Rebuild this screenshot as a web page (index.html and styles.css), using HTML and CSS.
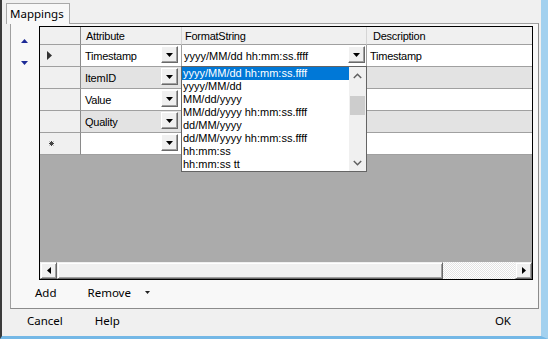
FILE: index.html
```html
<!DOCTYPE html>
<html>
<head>
<meta charset="utf-8">
<title>Mappings</title>
<link rel="stylesheet" href="styles.css">
</head>
<body>
<div class="window">
  <div class="tabstrip"><div class="tab">Mappings</div></div>
  <div class="page">
    <div class="page-main">
      <div class="movers">
        <svg class="mv" width="7" height="4" viewBox="0 0 7 4"><polygon points="3.5,0 7,4 0,4" fill="#1c2a96"/></svg>
        <svg class="mv" width="7" height="4" viewBox="0 0 7 4"><polygon points="0,0 7,0 3.5,4" fill="#1c2a96"/></svg>
      </div>
      <div class="grid">
        <div class="row head">
          <div class="c rh"></div>
          <div class="c attr">Attribute</div>
          <div class="c fmt">FormatString</div>
          <div class="c desc">Description</div>
        </div>
        <div class="row">
          <div class="c rh"><svg class="cur" width="5" height="9" viewBox="0 0 5 9"><polygon points="0,0 5,4.5 0,9" fill="#333"/></svg></div>
          <div class="c attr"><span class="txt">Timestamp</span><span class="ddb"><svg width="7" height="4" viewBox="0 0 7 4"><polygon points="0,0 7,0 3.5,4" fill="#000"/></svg></span></div>
          <div class="c fmt edit">
            <div class="combo">
              <span class="ctext">yyyy/MM/dd hh:mm:ss.ffff</span>
              <span class="ddb cb"><svg width="7" height="4" viewBox="0 0 7 4"><polygon points="0,0 7,0 3.5,4" fill="#000"/></svg></span>
            </div>
            <div class="dropdown">
              <div class="opts">
                <div class="opt sel">yyyy/MM/dd hh:mm:ss.ffff</div>
                <div class="opt">yyyy/MM/dd</div>
                <div class="opt">MM/dd/yyyy</div>
                <div class="opt">MM/dd/yyyy hh:mm:ss.ffff</div>
                <div class="opt">dd/MM/yyyy</div>
                <div class="opt">dd/MM/yyyy hh:mm:ss.ffff</div>
                <div class="opt">hh:mm:ss</div>
                <div class="opt">hh:mm:ss tt</div>
              </div>
              <div class="vscroll">
                <div class="vbtn"><svg width="9" height="6" viewBox="0 0 9 6"><polyline points="0.8,5 4.5,1.3 8.2,5" fill="none" stroke="#606060" stroke-width="1.5"/></svg></div>
                <div class="vgap"></div>
                <div class="vthumb"></div>
                <div class="vtrack"></div>
                <div class="vbtn"><svg width="9" height="6" viewBox="0 0 9 6"><polyline points="0.8,1 4.5,4.7 8.2,1" fill="none" stroke="#606060" stroke-width="1.5"/></svg></div>
              </div>
            </div>
          </div>
          <div class="c desc">Timestamp</div>
        </div>
        <div class="row alt">
          <div class="c rh"></div>
          <div class="c attr"><span class="txt">ItemID</span><span class="ddb"><svg width="7" height="4" viewBox="0 0 7 4"><polygon points="0,0 7,0 3.5,4" fill="#000"/></svg></span></div>
          <div class="c fmt"></div>
          <div class="c desc"></div>
        </div>
        <div class="row">
          <div class="c rh"></div>
          <div class="c attr"><span class="txt">Value</span><span class="ddb"><svg width="7" height="4" viewBox="0 0 7 4"><polygon points="0,0 7,0 3.5,4" fill="#000"/></svg></span></div>
          <div class="c fmt"></div>
          <div class="c desc"></div>
        </div>
        <div class="row alt">
          <div class="c rh"></div>
          <div class="c attr"><span class="txt">Quality</span><span class="ddb"><svg width="7" height="4" viewBox="0 0 7 4"><polygon points="0,0 7,0 3.5,4" fill="#000"/></svg></span></div>
          <div class="c fmt"></div>
          <div class="c desc"></div>
        </div>
        <div class="row">
          <div class="c rh"><svg class="newrow" width="5" height="5" viewBox="0 0 5 5"><g stroke="#444" stroke-width="1"><line x1="2.5" y1="0" x2="2.5" y2="5"/><line x1="0" y1="2.5" x2="5" y2="2.5"/><line x1="0.7" y1="0.7" x2="4.3" y2="4.3"/><line x1="4.3" y1="0.7" x2="0.7" y2="4.3"/></g></svg></div>
          <div class="c attr"><span class="txt"></span><span class="ddb"><svg width="7" height="4" viewBox="0 0 7 4"><polygon points="0,0 7,0 3.5,4" fill="#000"/></svg></span></div>
          <div class="c fmt"></div>
          <div class="c desc"></div>
        </div>
        <div class="empty"></div>
        <div class="hscroll">
          <div class="hbtn"><svg width="4" height="7" viewBox="0 0 4 7"><polygon points="4,0 0,3.5 4,7" fill="#000"/></svg></div>
          <div class="hthumb"></div>
          <div class="htrack"></div>
          <div class="hbtn"><svg width="4" height="7" viewBox="0 0 4 7"><polygon points="0,0 4,3.5 0,7" fill="#000"/></svg></div>
        </div>
      </div>
    </div>
    <div class="page-actions">
      <span class="act">Add</span>
      <span class="act remove">Remove</span>
      <svg class="split" width="5" height="3" viewBox="0 0 5 3"><polygon points="0,0 5,0 2.5,3" fill="#222"/></svg>
    </div>
  </div>
  <div class="footer">
    <span class="btn">Cancel</span>
    <span class="btn help">Help</span>
    <span class="btn ok">OK</span>
  </div>
</div>
</body>
</html>
```

FILE: styles.css
```css
html, body {
  margin: 0;
  padding: 0;
}
body {
  background: #f0f0f0;
  font-family: "Liberation Sans", Arial, sans-serif;
  font-size: 11px;
  color: #000;
}
.window {
  width: 548px;
  height: 339px;
  box-sizing: border-box;
  border-left: 2px solid #3b3b3b;
  border-right: 7px solid #a3d1ef;
  border-bottom: 3px solid #74b8e6;
  display: flex;
  flex-direction: column;
  overflow: hidden;
}
.tabstrip {
  height: 23px;
  flex: none;
  display: flex;
  align-items: flex-end;
  padding-left: 4px;
}
.tab {
  height: 21px;
  box-sizing: border-box;
  margin-bottom: -1px;
  padding: 0 5px 1px 3px;
  border: 1px solid #a9a9a9;
  border-bottom: none;
  background: #f8f8f8;
  display: flex;
  align-items: center;
  position: relative;
  z-index: 1;
  font-family: "Noto Sans", "Open Sans", sans-serif;
  font-size: 11.5px;
}
.page {
  height: 286px;
  flex: none;
  box-sizing: border-box;
  margin: 0 2px 0 8px;
  border: 1px solid #a0a0a0;
  border-right-color: #8c8c8c;
  border-bottom-color: #8c8c8c;
  background: #f8f8f8;
  display: flex;
  flex-direction: column;
}
.page-main {
  display: flex;
  padding-top: 2px;
}
.movers {
  width: 26px;
  flex: none;
  display: flex;
  flex-direction: column;
  align-items: center;
  padding-top: 13px;
  gap: 18px;
  margin-right: 2px;
}
.mv { display: block; }
.grid {
  width: 494px;
  height: 254px;
  box-sizing: border-box;
  border: 1px solid #000;
  background: #ababab;
  display: flex;
  flex-direction: column;
}
.row {
  display: flex;
  height: 22px;
  flex: none;
}
.row.head { height: 18px; }
.c {
  box-sizing: border-box;
  border-right: 1px solid #a0a0a0;
  border-bottom: 1px solid #a0a0a0;
  display: flex;
  align-items: center;
  background: #fff;
  white-space: nowrap;
  letter-spacing: -0.25px;
}
.rh { width: 41px; background: #f0f0f0; border-right-color: #8a8a8a; }
.attr { width: 101px; padding-left: 4px; }
.fmt { width: 185px; }
.desc { width: 165px; border-right: none; padding-left: 3px; }
.head .c {
  background: #f0f0f0;
  border-right-color: #d5d5d5;
  border-bottom-color: #a0a0a0;
}
.head .attr { padding-left: 5px; }
.head .fmt { padding-left: 3px; }
.head .desc { padding-left: 6px; }
.head .rh { border-right-color: #8a8a8a; }
.row.alt .attr, .row.alt .desc, .row.alt .fmt { background: #e3e3e3; }
.cur { margin-left: 7px; display: block; }
.newrow { margin-left: 9px; display: block; }
.txt { flex: 1; }
.ddb {
  width: 17px;
  height: 17px;
  box-sizing: border-box;
  margin-right: 3px;
  align-self: flex-start;
  margin-top: 1px;
  background: #f0f0f0;
  border: 1px solid;
  border-color: #ffffff #696969 #696969 #ffffff;
  box-shadow: inset -1px -1px 0 #a0a0a0;
  display: flex;
  align-items: center;
  justify-content: center;
  flex: none;
}
.ddb svg { display: block; margin-top: 1px; }
.fmt.edit {
  position: relative;
  background: #fff;
}
.combo {
  flex: 1;
  display: flex;
  align-items: center;
  height: 100%;
  letter-spacing: 0;
}
.ctext { flex: 1; padding-left: 2px; }
.ddb.cb { margin-right: 1px; }
.dropdown {
  position: absolute;
  left: -1px;
  top: 21px;
  width: 186px;
  height: 106px;
  box-sizing: border-box;
  border: 1px solid #646464;
  background: #fff;
  display: flex;
  z-index: 5;
  letter-spacing: 0;
}
.opts { flex: 1; }
.opt {
  height: 13px;
  line-height: 13px;
  padding-left: 1px;
  white-space: nowrap;
}
.opt.sel { background: #0078d7; color: #fff; }
.vscroll {
  width: 17px;
  flex: none;
  background: #f0f0f0;
  display: flex;
  flex-direction: column;
}
.vbtn {
  height: 17px;
  flex: none;
  display: flex;
  align-items: center;
  justify-content: center;
}
.vbtn svg { display: block; }
.vgap { height: 12px; flex: none; }
.vthumb {
  height: 19px;
  flex: none;
  margin: 0 1px;
  background: #cdcdcd;
}
.vtrack { flex: 1; }
.empty { flex: 1; }
.hscroll {
  height: 17px;
  flex: none;
  display: flex;
  background: repeating-conic-gradient(#ffffff 0 25%, #e4e4e4 0 50%) 0 0 / 2px 2px;
}
.hbtn, .hthumb {
  box-sizing: border-box;
  height: 17px;
  background: #f0f0f0;
  border: 1px solid;
  border-color: #f0f0f0 #696969 #696969 #f0f0f0;
  box-shadow: inset 1px 1px 0 #fff, inset -1px -1px 0 #a0a0a0;
  display: flex;
  align-items: center;
  justify-content: center;
  flex: none;
}
.hbtn { width: 17px; }
.hbtn svg { display: block; }
.hthumb { width: 386px; }
.htrack { flex: 1; }
.page-actions {
  flex: 1;
  display: flex;
  align-items: center;
  padding-left: 24px;
  padding-bottom: 4px;
  font-family: "Noto Sans", "Open Sans", sans-serif;
  font-size: 11.5px;
}
.remove { margin-left: 31px; }
.split { margin-left: 14px; display: block; }
.footer {
  flex: 1;
  display: flex;
  align-items: center;
  padding: 0 30px 4px 25px;
  font-family: "Noto Sans", "Open Sans", sans-serif;
  font-size: 11.5px;
}
.help { margin-left: 32px; }
.ok { margin-left: auto; }
```
